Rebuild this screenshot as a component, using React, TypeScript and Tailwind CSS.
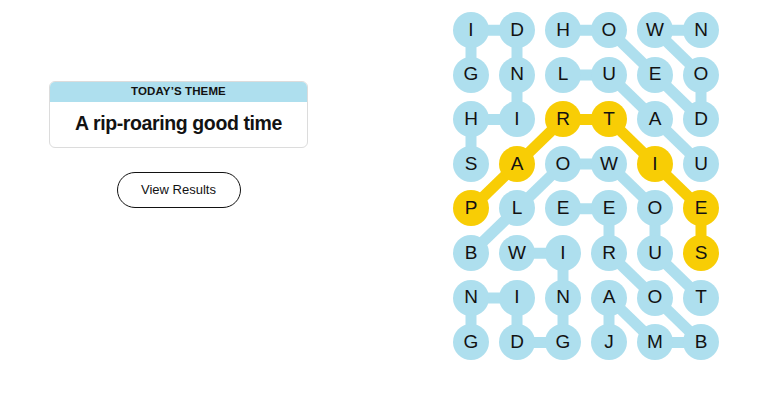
import React from "react";

const LETTERS = [
  "IDHOWN",
  "GNLUEO",
  "HIRTAD",
  "SAOWIU",
  "PLEEOE",
  "BWIRUS",
  "NINAOT",
  "GDGJMB",
];

type P = [number, number];
const BLUE = "#aedfee";
const YELLOW = "#f8cd05";

const words: { path: P[]; spangram?: boolean }[] = [
  // SHINDIG
  { path: [[0, 3], [0, 2], [1, 2], [1, 1], [1, 0], [0, 0], [0, 1]] },
  // HOEDOWN
  { path: [[2, 0], [3, 0], [4, 1], [5, 2], [5, 1], [4, 0], [5, 0]] },
  // LUAU
  { path: [[2, 1], [3, 1], [4, 2], [5, 3]] },
  // BLOWOUT
  { path: [[0, 5], [1, 4], [2, 3], [3, 3], [4, 4], [4, 5], [5, 6]] },
  // JAMBOREE
  { path: [[3, 7], [3, 6], [4, 7], [5, 7], [4, 6], [3, 5], [3, 4], [2, 4]] },
  // WINGDING
  { path: [[1, 5], [2, 5], [2, 6], [2, 7], [1, 7], [1, 6], [0, 6], [0, 7]] },
  // PARTIES
  { path: [[0, 4], [1, 3], [2, 2], [3, 2], [4, 3], [5, 4], [5, 5]], spangram: true },
];

const CW = 46;
const CH = 44.6;
const cx = (c: number) => CW / 2 + CW * c;
const cy = (r: number) => CH / 2 + CH * r;

const yellowSet = new Set(
  words.filter((w) => w.spangram).flatMap((w) => w.path.map(([c, r]) => `${c},${r}`))
);

export default function App() {
  return (
    <div
      className="w-[768px] h-[402px] bg-white flex overflow-hidden"
      style={{ fontFamily: '"Liberation Sans", Arial, sans-serif' }}
    >
      <div className="w-[308px] pl-[49px] pt-[81px] flex flex-col items-center shrink-0">
        <div className="w-[259px] h-[67px] rounded-[6px] border border-[#dcdcdc] overflow-hidden flex flex-col">
          <div className="h-[20px] bg-[#aedfee] flex items-center justify-center text-[11.5px] font-bold tracking-[0.01em] text-[#121212]">
            TODAY’S THEME
          </div>
          <div className="flex-1 flex items-center justify-center text-[19.5px] font-bold tracking-[-0.02em] text-[#121212] pb-[1px]">
            A rip-roaring good time
          </div>
        </div>
        <button className="mt-[24px] w-[124px] h-[36px] rounded-full border border-[#121212] bg-white text-[13px] text-[#121212] flex items-center justify-center">
          View Results
        </button>
      </div>
      <div className="ml-[140px] mt-[7.7px] relative w-[276px] h-[356.8px] shrink-0">
        <svg className="absolute inset-0" width={276} height={356.8}>
          {words.map((w, i) =>
            w.path.slice(1).map(([c, r], j) => {
              const [pc, pr] = w.path[j];
              return (
                <line
                  key={`${i}-${j}`}
                  x1={cx(pc)}
                  y1={cy(pr)}
                  x2={cx(c)}
                  y2={cy(r)}
                  stroke={w.spangram ? YELLOW : BLUE}
                  strokeWidth={11}
                />
              );
            })
          )}
        </svg>
        <div className="relative grid grid-cols-[repeat(6,46px)] grid-rows-[repeat(8,44.6px)]">
          {LETTERS.map((row, r) =>
            row.split("").map((ch, c) => (
              <div key={`${r}-${c}`} className="flex items-center justify-center">
                <div
                  className={`w-[36px] h-[36px] rounded-full flex items-center justify-center text-[19px] text-[#121212] ${
                    yellowSet.has(`${c},${r}`) ? "bg-[#f8cd05]" : "bg-[#aedfee]"
                  }`}
                >
                  {ch}
                </div>
              </div>
            ))
          )}
        </div>
      </div>
    </div>
  );
}
